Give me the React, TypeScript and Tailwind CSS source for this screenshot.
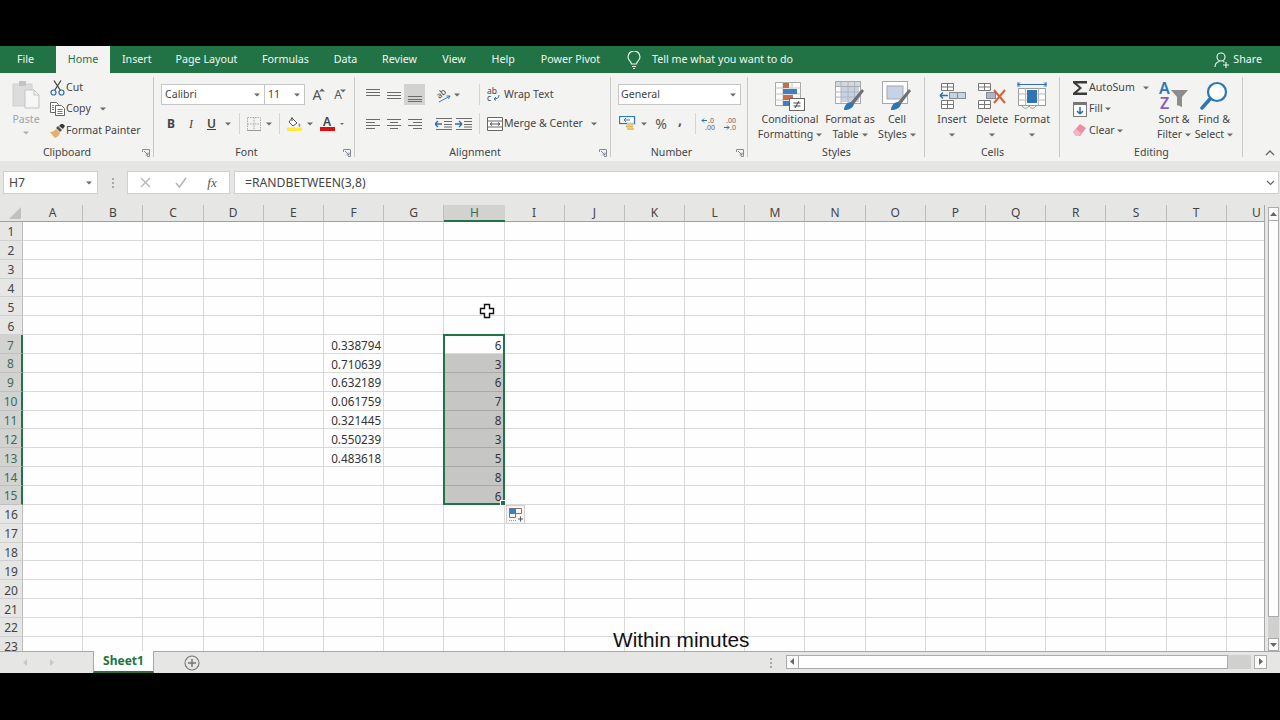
import type { ReactNode } from 'react';

const UI = "font-['Noto_Sans',sans-serif]";

const tabs = [
  { label: 'Insert', w: 'w-[53.5px]' },
  { label: 'Page Layout', w: 'w-[86px]' },
  { label: 'Formulas', w: 'w-[72px]' },
  { label: 'Data', w: 'w-[48px]' },
  { label: 'Review', w: 'w-[60px]' },
  { label: 'View', w: 'w-[49px]' },
  { label: 'Help', w: 'w-[49.5px]' },
  { label: 'Power Pivot', w: 'w-[85px]' },
];

const columns = ['A', 'B', 'C', 'D', 'E', 'F', 'G', 'H', 'I', 'J', 'K', 'L', 'M', 'N', 'O', 'P', 'Q', 'R', 'S', 'T', 'U'];
const rows = Array.from({ length: 23 }, (_, i) => i + 1);

const randValues: Record<number, string> = {
  7: '0.338794',
  8: '0.710639',
  9: '0.632189',
  10: '0.061759',
  11: '0.321445',
  12: '0.550239',
  13: '0.483618',
};

const betweenValues: Record<number, string> = { 7: '6', 8: '3', 9: '6', 10: '7', 11: '8', 12: '3', 13: '5', 14: '8', 15: '6' };

const Caret = ({ className = '' }: { className?: string }) => (
  <svg width="6" height="4" viewBox="0 0 6 4" className={className}>
    <path d="M0 .5h6L3 3.5z" fill="#6a6a6a" />
  </svg>
);

const Launcher = () => (
  <svg width="8" height="8" viewBox="0 0 8 8" className="absolute right-[4px] bottom-[4px]">
    <path d="M.5 3V.5H7.5V7.5H5" fill="none" stroke="#8c8c8c" />
    <path d="M2 2l4 4M6 3.5V6H3.5" fill="none" stroke="#6c8aa8" />
  </svg>
);

const Slot = ({ w, children }: { w: string; children?: ReactNode }) => (
  <span className={`${w} flex items-center justify-center shrink-0`}>{children}</span>
);

const VSep = () => <span className="w-px h-full bg-[#d4d4d3] shrink-0" />;

const Group = ({ w, label, launcher, pr, children }: { w: string; label: string; launcher?: boolean; pr?: string; children: ReactNode }) => (
  <div className={`${w} relative shrink-0 flex flex-col`}>
    <div className="h-[71px] flex">{children}</div>
    <div className={`h-[16px] leading-[16px] text-center text-[10.6px] text-[#444] ${pr ?? ''}`}>{label}</div>
    {launcher && <Launcher />}
    <span className="absolute right-0 top-[4px] bottom-[4px] w-px bg-[#c8c8c7]" />
  </div>
);

const Lines = ({ ys }: { ys: number[] }) => (
  <svg width="14" height="14" viewBox="0 0 14 14">
    {ys.map((y) => (
      <path key={y} d={`M0 ${y}.5H14`} stroke="#6b6b6b" />
    ))}
  </svg>
);

const AlignH = ({ d }: { d: string }) => (
  <svg width="14" height="12" viewBox="0 0 14 12">
    <path d={d} stroke="#6b6b6b" fill="none" />
  </svg>
);

const BigButton = ({ w, icon, lines }: { w: string; icon: ReactNode; lines: ReactNode[] }) => (
  <div className={`${w} shrink-0 flex flex-col items-center pt-[8px] text-[10.6px] leading-[15px] text-[#444]`}>
    <div className="h-[30px] flex items-center justify-center">{icon}</div>
    <div className="mt-[1px] whitespace-nowrap">{lines[0]}</div>
    <div className="whitespace-nowrap flex items-center justify-center h-[15px]">
      {lines[1]}
      <Caret className={lines[1] ? 'ml-[3px]' : ''} />
    </div>
  </div>
);

const PasteIcon = () => (
  <svg width="28" height="29" viewBox="0 0 28 29">
    <rect x="1" y="4" width="19" height="22" fill="#dcdcdc" stroke="#d0d0d0" />
    <rect x="7" y="1" width="7" height="5" fill="#c4c4c4" />
    <path d="M13 10h9l5 5v13H13z" fill="#f6f6f6" stroke="#c4c4c4" />
    <path d="M22 10v5h5" fill="none" stroke="#c4c4c4" />
  </svg>
);

const CutIcon = () => (
  <svg width="15" height="16" viewBox="0 0 15 16">
    <path d="M4.5 10.5L11 .5M10.500 10.500L4 .5" stroke="#444" strokeWidth="1.3" fill="none" />
    <circle cx="3.5" cy="12.5" r="2.5" fill="none" stroke="#2e6fb0" strokeWidth="1.2" />
    <circle cx="11.5" cy="12.5" r="2.5" fill="none" stroke="#2e6fb0" strokeWidth="1.2" />
  </svg>
);

const CopyIcon = () => (
  <svg width="15" height="14" viewBox="0 0 15 14">
    <path d="M.5 .5h6l2 2v8h-8z" fill="#fff" stroke="#666" />
    <path d="M5.500 3.500h6l3 3v7h-9z" fill="#fff" stroke="#666" />
    <path d="M7.500 7.500h5M7.500 9.500h5M7.500 11.500h5M2 3.500h2M2 5.500h2M2 7.500h2" stroke="#777" />
  </svg>
);

const PainterIcon = () => (
  <svg width="15" height="14" viewBox="0 0 15 14">
    <path d="M0 8c3 0 5-2 6-3l4 4c-1 2-2 4-5 5-1-1-3-3-5-6z" fill="#e3b268" />
    <path d="M6 4l2-2 4 4-2 2z" fill="#555" />
    <path d="M9 2l2-2h2l2 2-2 3z" fill="#3a3a3a" />
  </svg>
);

const OrientIcon = () => (
  <svg width="16" height="16" viewBox="0 0 16 16" className="overflow-visible">
    <text x="2" y="10" fontSize="8.5" fill="#444" transform="rotate(-40 6 8)" fontFamily="Noto Sans">ab</text>
    <path d="M4 15l11-6M15 9l-3.500 0M15 9l-1.600 3" stroke="#3f7cb8" fill="none" />
  </svg>
);

const IndentIcon = ({ out }: { out?: boolean }) => (
  <svg width="17" height="12" viewBox="0 0 17 12">
    {out ? (
      <path d="M0 6h7M0 6l3-3M0 6l3 3" stroke="#2e6fb0" strokeWidth="1.4" fill="none" />
    ) : (
      <path d="M7 6H0M7 6L4 3M7 6L4 9" stroke="#2e6fb0" strokeWidth="1.4" fill="none" />
    )}
    <path d="M1 .5h16M9 3.500h8M9 6.500h8M9 9h8M1 11.500h16" stroke="#6b6b6b" fill="none" />
  </svg>
);

const BordersIcon = () => (
  <svg width="14" height="14" viewBox="0 0 14 14">
    <path d="M.5 .5h13v13h-13zM7 .5v13M.5 7h13" fill="none" stroke="#aaa" strokeDasharray="1.5 1" />
    <path d="M0 13.500h14" stroke="#999" />
  </svg>
);

const FillIcon = () => (
  <svg width="16" height="15" viewBox="0 0 16 15">
    <path d="M5 2l5 5-4 3-4-4z" fill="#fff" stroke="#555" />
    <path d="M5 1V5" stroke="#555" />
    <path d="M12 7c1 1.500 2 2.500 1 3.500s-2-1-1-3.500z" fill="#5e8fc0" />
    <rect x="0" y="11.500" width="15" height="3.500" fill="#ffeb3b" />
  </svg>
);

const WrapIcon = () => (
  <svg width="15" height="15" viewBox="0 0 15 15" className="overflow-visible">
    <text x="0" y="7" fontSize="8.5" fill="#444" fontFamily="Noto Sans">ab</text>
    <text x="0" y="14" fontSize="8.5" fill="#444" fontFamily="Noto Sans">c</text>
    <path d="M12 8c0 3-2 4-5 4M7 12l2-2M7 12l2 1.500" stroke="#2e6fb0" fill="none" />
  </svg>
);

const MergeIcon = () => (
  <svg width="16" height="14" viewBox="0 0 16 14">
    <path d="M.5 .5h15v13h-15zM.5 4h15M.5 10h15" fill="#fff" stroke="#666" />
    <path d="M3 7h10M3 7l2-1.500M3 7l2 1.500M13 7l-2-1.500M13 7l-2 1.500" stroke="#555" fill="none" />
  </svg>
);

const AccountingIcon = () => (
  <svg width="17" height="15" viewBox="0 0 17 15">
    <rect x=".5" y=".5" width="15" height="7" fill="#fff" stroke="#2e7cc0" strokeWidth="1.3" />
    <path d="M5 4h6M5 4l2-2M5 4l2 2" stroke="#2e7cc0" fill="none" />
    <rect x="8" y="7" width="7" height="2" fill="#e9c46a" />
    <rect x="7" y="9.500" width="7" height="2" fill="#d9b45a" />
    <rect x="8" y="12" width="7" height="2" fill="#e9c46a" />
  </svg>
);

const DecimalIcon = ({ more }: { more?: boolean }) => (
  <svg width="16" height="14" viewBox="0 0 16 14" fontFamily="Noto Sans" fontSize="7" fill="#666" className="overflow-visible">
    {more ? (
      <>
        <path d="M0 3.500h5M0 3.500l2-2M0 3.500l2 2" stroke="#2e6fb0" fill="none" />
        <text x="6" y="6">.0</text>
        <text x="3" y="13">.00</text>
      </>
    ) : (
      <>
        <text x="3" y="6">.00</text>
        <path d="M1 10.500h5M6 10.500l-2-2M6 10.500l-2 2" stroke="#2e6fb0" fill="none" />
        <text x="7" y="13">.0</text>
      </>
    )}
  </svg>
);

const ConditionalIcon = () => (
  <svg width="30" height="29" viewBox="0 0 30 29">
    <path d="M.5 .5h25v23h-25z" fill="#fff" stroke="#a8a8a8" />
    <path d="M8 .5v23M17 .5v23M.5 6h25M.5 12h25M.5 18h25" stroke="#c4c4c4" />
    <rect x="8" y="1" width="6" height="5" fill="#cc6b45" />
    <rect x="8" y="7" width="14" height="5" fill="#3f7fbf" />
    <rect x="8" y="13" width="10" height="5" fill="#cc6b45" />
    <rect x="8" y="19" width="6" height="5" fill="#3f7fbf" />
    <rect x="14.500" y="16.500" width="15" height="12" fill="#fff" stroke="#666" />
    <path d="M18.500 21h7M18.500 24h7M20 26l4-7" stroke="#444" fill="none" />
  </svg>
);

const Brush = () => (
  <>
    <path d="M9 29c0-4 3-8 7-8 2 0 3 1 3 2-1 4-5 6-10 6z" fill="#2e75b6" />
    <path d="M16 21L27 8l2 2-10 13z" fill="#707070" />
  </>
);

const FormatTableIcon = () => (
  <svg width="30" height="30" viewBox="0 0 30 30">
    <rect x=".5" y=".5" width="25" height="22" fill="#fff" stroke="#a8a8a8" />
    <rect x=".5" y=".5" width="25" height="5" fill="#cfd8e4" stroke="#a8a8a8" />
    <rect x="6" y="6" width="18" height="15" fill="#c5d3e6" />
    <path d="M6 .5v22M13 .5v22M19.500 .5v22M.5 11h25M.5 16h25" stroke="#b4b4b4" />
    <Brush />
  </svg>
);

const CellStylesIcon = () => (
  <svg width="30" height="30" viewBox="0 0 30 30">
    <rect x=".5" y=".5" width="25" height="22" fill="#fff" stroke="#a8a8a8" />
    <rect x="5" y="5" width="16" height="13" fill="#c5d3e6" stroke="#a8a8a8" />
    <Brush />
  </svg>
);

const InsertIcon = () => (
  <svg width="28" height="28" viewBox="0 0 28 28">
    <path d="M3.500 1.500h12v7h-12zM9.500 1.500v7M3.500 5h12" fill="#fff" stroke="#777" />
    <path d="M3.500 18.500h12v8h-12zM9.500 18.500v8M3.500 22.500h12" fill="#fff" stroke="#777" />
    <path d="M2 13.500h8M2 13.500l3-3M2 13.500l3 3" stroke="#2e6fb0" strokeWidth="1.4" fill="none" />
    <rect x="11.500" y="10.500" width="16" height="6" fill="#c5d3e6" stroke="#8a8a8a" />
    <path d="M19.500 10.500v6" stroke="#8a8a8a" />
  </svg>
);

const DeleteIcon = () => (
  <svg width="30" height="28" viewBox="0 0 30 28">
    <path d="M1.500 1.500h12v7h-12zM7.500 1.500v7M1.500 5h12" fill="#fff" stroke="#777" />
    <path d="M1.500 18.500h12v8h-12zM7.500 18.500v8M1.500 22.500h12" fill="#fff" stroke="#777" />
    <rect x="9.500" y="10.500" width="9" height="6" fill="#a8b8cc" stroke="#8a8a8a" />
    <path d="M17 8l11 13M28 8L17 21" stroke="#d2633c" strokeWidth="2" />
  </svg>
);

const FormatIcon = () => (
  <svg width="30" height="30" viewBox="0 0 30 30">
    <path d="M1 1v5M1 3.500h28M29 1v5M1 3.500l2-2M1 3.500l2 2M29 3.500l-2-2M29 3.500l-2 2" stroke="#2e6fb0" fill="none" />
    <path d="M1.500 7.500h27v17h-27z" fill="#fff" stroke="#9a9a9a" />
    <path d="M8.500 7.500v17M21.500 7.500v17M1.500 13h27M1.500 19h27" stroke="#b8b8b8" />
    <rect x="10" y="9" width="10" height="13" fill="#2e75b6" />
    <path d="M5 25c2 3 5 3 7 0 2 3 5 3 7 0" fill="none" stroke="#9a9a9a" />
  </svg>
);

const SumIcon = () => (
  <svg width="14" height="14" viewBox="0 0 14 14">
    <path d="M0 0h14v2.500H4L9 7l-5 4.500h10V14H0v-2l6-5-6-5z" fill="#3c3c3c" />
  </svg>
);

const FillDownIcon = () => (
  <svg width="14" height="15" viewBox="0 0 14 15">
    <rect x=".5" y=".5" width="13" height="14" fill="#fff" stroke="#777" />
    <rect x="0" y="0" width="14" height="3" fill="#777" />
    <path d="M7 5v7M7 12L4 9M7 12l3-3" stroke="#2e6fb0" strokeWidth="1.6" fill="none" />
  </svg>
);

const EraserIcon = () => (
  <svg width="14" height="13" viewBox="0 0 14 13">
    <path d="M0 8l7-8 6 4-6 8H3z" fill="#ea8fa2" />
    <path d="M0 8l3-3 5 4-2 3H3z" fill="#f4b8c4" />
  </svg>
);

const SortIcon = () => (
  <svg width="30" height="30" viewBox="0 0 30 30" fontFamily="Noto Sans" fontWeight="600" fontSize="16" className="overflow-visible">
    <text x="0" y="13" fill="#2e75b6">A</text>
    <text x="1" y="28" fill="#8f5bb8">Z</text>
    <path d="M12 9h17l-6 7v10l-5-2v-8z" fill="#8c8c8c" />
  </svg>
);

const FindIcon = () => (
  <svg width="28" height="30" viewBox="0 0 28 30">
    <circle cx="17" cy="11" r="9" fill="#fff" stroke="#2e75b6" strokeWidth="2.2" />
    <path d="M10 18L2 27" stroke="#2e75b6" strokeWidth="3.5" strokeLinecap="round" />
  </svg>
);

const CursorIcon = () => (
  <svg width="16" height="16" viewBox="0 0 16 16">
    <path d="M5.500 1.500h5v4h4v5h-4v4h-5v-4h-4v-5h4z" fill="#fff" stroke="#111" strokeWidth="1.4" />
  </svg>
);

const PasteOptions = () => (
  <div className="absolute left-[506px] top-[300px] w-[19px] h-[19px] bg-[#f6f6f6] border border-[#d0d0d0] flex items-center justify-center">
    <svg width="14" height="14" viewBox="0 0 14 14">
      <rect x="0" y="0" width="7" height="5" fill="#3f7cc8" />
      <path d="M.5 .5h12v5h-12zM.5 5.500h6v4h-6z" fill="none" stroke="#777" />
      <path d="M0 12.500h8" stroke="#999" strokeDasharray="1 1" />
      <path d="M9 11h5M11.500 8.500v5" stroke="#555" />
    </svg>
  </div>
);

const ScrollBtn = ({ d, w, h }: { d: string; w: string; h: string }) => (
  <div className={`${w} ${h} shrink-0 bg-[#fbfbfb] border border-[#ababab] flex items-center justify-center`}>
    <svg width="7" height="7" viewBox="0 0 7 7">
      <path d={d} fill="#666" />
    </svg>
  </div>
);

export default function App() {
  return (
    <div className={`w-[1280px] h-[720px] bg-black overflow-hidden pt-[46px] pb-[47px] flex flex-col ${UI}`}>
      {/* Tabs */}
      <div className="h-[27px] shrink-0 bg-[#217346] flex items-stretch text-[10.7px] text-[#f2f6f3]">
        <div className="w-[56px] pl-[17px] leading-[26px]">File</div>
        <div className="w-[54px] bg-[#f3f3f2] text-[#217346] text-center leading-[26px]">Home</div>
        {tabs.map((t) => (
          <div key={t.label} className={`${t.w} text-center leading-[26px] whitespace-nowrap`}>
            {t.label}
          </div>
        ))}
        <div className="ml-[14px] flex items-center">
          <svg width="14" height="18" viewBox="0 0 14 18" fill="none" stroke="#f2f6f3" strokeWidth="1.1">
            <path d="M4.500 13c0-2.500-3.500-3.500-3.500-7a6 6 0 0 1 12 0c0 3.500-3.500 4.500-3.500 7zM5 15.500h4M6 17.500h2" />
          </svg>
          <span className="ml-[11px] whitespace-nowrap">Tell me what you want to do</span>
        </div>
        <div className="ml-auto pr-[18px] flex items-center">
          <svg width="16" height="16" viewBox="0 0 16 16" fill="none" stroke="#f2f6f3" strokeWidth="1.1">
            <circle cx="7" cy="5" r="4" />
            <path d="M1 15c0-3 2-5 4.500-5.500M9 9.500c.5 .1 1 .3 1.500 .6M9 13h6M12 10v6" />
          </svg>
          <span className="ml-[3px]">Share</span>
        </div>
      </div>

      {/* Ribbon */}
      <div className="h-[88px] shrink-0 bg-[#f3f3f2] flex text-[10.6px] text-[#444]">
        <Group w="w-[154px]" label="Clipboard" launcher pr="pr-[20px]">
          <div className="w-[48px] flex flex-col items-center pt-[7px] pl-[4px] text-[#a3a3a3]">
            <PasteIcon />
            <span className="mt-[3px] leading-[15px]">Paste</span>
            <Caret className="mt-[4px] opacity-50" />
          </div>
          <div className="flex flex-col pt-[4px] whitespace-nowrap">
            <div className="h-[21.5px] flex items-center"><Slot w="w-[18px]"><CutIcon /></Slot>Cut</div>
            <div className="h-[21.5px] flex items-center"><Slot w="w-[18px]"><CopyIcon /></Slot>Copy<Caret className="ml-[9px]" /></div>
            <div className="h-[21.5px] flex items-center"><Slot w="w-[18px]"><PainterIcon /></Slot>Format Painter</div>
          </div>
        </Group>

        <Group w="w-[201px]" label="Font" launcher pr="pr-[16px]">
          <div className="pl-[7px] pt-[11px] flex flex-col">
            <div className="h-[21px] flex items-center">
              <div className="w-[104px] h-full bg-white border border-[#c6c6c6] flex items-center justify-between pl-[3px] pr-[4px]">Calibri<Caret /></div>
              <div className="w-[40px] h-full bg-white border border-l-0 border-[#c6c6c6] flex items-center justify-between pl-[3px] pr-[4px]">11<Caret /></div>
              <Slot w="w-[24px]">
                <span className="relative text-[14px] leading-none text-[#555]">A<span className="absolute -right-[4px] top-0"><Caret className="rotate-180" /></span></span>
              </Slot>
              <Slot w="w-[18px]">
                <span className="relative text-[12px] leading-none text-[#555]">A<span className="absolute -right-[4px] top-0"><Caret /></span></span>
              </Slot>
            </div>
            <div className="h-[21px] mt-[8px] flex items-center text-[#444]">
              <Slot w="w-[20px]"><b className="text-[12px]">B</b></Slot>
              <Slot w="w-[20px]"><i className="text-[12px] font-['Liberation_Serif',serif]">I</i></Slot>
              <Slot w="w-[21px]"><u className="text-[12px] font-semibold">U</u></Slot>
              <Slot w="w-[12px]"><Caret /></Slot>
              <span className="w-[5px]" />
              <VSep />
              <span className="w-[4px]" />
              <Slot w="w-[19px]"><BordersIcon /></Slot>
              <Slot w="w-[12px]"><Caret /></Slot>
              <span className="w-[4px]" />
              <VSep />
              <span className="w-[4px]" />
              <Slot w="w-[22px]"><FillIcon /></Slot>
              <Slot w="w-[8px]"><Caret /></Slot>
              <Slot w="w-[26px]">
                <span className="flex flex-col items-center leading-none">
                  <span className="text-[12px] leading-[11px] font-semibold text-[#444]">A</span>
                  <span className="w-[15px] h-[4px] bg-[#e01010]" />
                </span>
              </Slot>
              <Slot w="w-[4px]"><Caret /></Slot>
            </div>
          </div>
        </Group>

        <Group w="w-[256px]" label="Alignment" launcher pr="pr-[16px]">
          <div className="pl-[8px] pt-[11px] flex flex-col whitespace-nowrap">
            <div className="h-[21px] flex items-center">
              <Slot w="w-[20px]"><Lines ys={[1, 4, 7]} /></Slot>
              <Slot w="w-[21px]"><Lines ys={[4, 7, 10]} /></Slot>
              <Slot w="w-[21px]"><span className="w-[21px] h-[21px] bg-[#d2d2d1] flex items-center justify-center"><Lines ys={[8, 11, 13]} /></span></Slot>
              <span className="w-[11px]" />
              <Slot w="w-[14px]"><OrientIcon /></Slot>
              <Slot w="w-[14px]"><Caret /></Slot>
              <span className="w-[15px]" />
              <VSep />
              <span className="w-[7px]" />
              <WrapIcon />
              <span className="ml-[2px]">Wrap Text</span>
            </div>
            <div className="h-[21px] mt-[8px] flex items-center">
              <Slot w="w-[20px]"><AlignH d="M0 1.500h14M0 4.500h9M0 7.500h14M0 10.500h9" /></Slot>
              <Slot w="w-[21px]"><AlignH d="M0 1.500h14M3 4.500h8M0 7.500h14M3 10.500h8" /></Slot>
              <Slot w="w-[21px]"><AlignH d="M0 1.500h14M5 4.500h9M0 7.500h14M5 10.500h9" /></Slot>
              <span className="w-[8px]" />
              <Slot w="w-[20px]"><IndentIcon out /></Slot>
              <Slot w="w-[21px]"><IndentIcon /></Slot>
              <span className="w-[5px]" />
              <VSep />
              <span className="w-[7px]" />
              <MergeIcon />
              <span className="ml-[1px]">Merge &amp; Center</span>
              <Caret className="ml-[8px]" />
            </div>
          </div>
        </Group>

        <Group w="w-[137px]" label="Number" launcher pr="pr-[16px]">
          <div className="pl-[7px] pt-[11px] flex flex-col">
            <div className="w-[123px] h-[21px] bg-white border border-[#c6c6c6] flex items-center justify-between pl-[2px] pr-[4px]">General<Caret /></div>
            <div className="h-[21px] mt-[8px] flex items-center">
              <Slot w="w-[18px]"><AccountingIcon /></Slot>
              <Slot w="w-[16px]"><Caret /></Slot>
              <Slot w="w-[18px]"><span className="text-[14px] text-[#555]">%</span></Slot>
              <Slot w="w-[20px]"><b className="text-[14px] leading-none -mt-[8px] text-[#555]">,</b></Slot>
              <span className="w-[5px]" />
              <VSep />
              <span className="w-[4px]" />
              <Slot w="w-[20px]"><DecimalIcon more /></Slot>
              <Slot w="w-[21px]"><DecimalIcon /></Slot>
            </div>
          </div>
        </Group>

        <Group w="w-[177px]" label="Styles">
          <span className="w-[10px]" />
          <BigButton w="w-[64px]" icon={<ConditionalIcon />} lines={['Conditional', 'Formatting']} />
          <BigButton w="w-[56px]" icon={<FormatTableIcon />} lines={['Format as', 'Table']} />
          <BigButton w="w-[38px]" icon={<CellStylesIcon />} lines={['Cell', 'Styles']} />
        </Group>

        <Group w="w-[135px]" label="Cells">
          <span className="w-[7px]" />
          <BigButton w="w-[40px]" icon={<InsertIcon />} lines={['Insert', '']} />
          <BigButton w="w-[40px]" icon={<DeleteIcon />} lines={['Delete', '']} />
          <BigButton w="w-[40px]" icon={<FormatIcon />} lines={['Format', '']} />
        </Group>

        <Group w="w-[183px]" label="Editing">
          <div className="w-[94px] pl-[11px] pt-[4px] flex flex-col whitespace-nowrap">
            <div className="h-[21.5px] flex items-center"><Slot w="w-[18px]"><SumIcon /></Slot>AutoSum<Caret className="ml-[8px]" /></div>
            <div className="h-[21.5px] flex items-center"><Slot w="w-[18px]"><FillDownIcon /></Slot>Fill<Caret className="ml-[2px]" /></div>
            <div className="h-[21.5px] flex items-center"><Slot w="w-[18px]"><EraserIcon /></Slot>Clear<Caret className="ml-[2px]" /></div>
          </div>
          <BigButton w="w-[40px]" icon={<SortIcon />} lines={['Sort &', 'Filter']} />
          <BigButton w="w-[40px]" icon={<FindIcon />} lines={['Find &', 'Select']} />
        </Group>

        <div className="flex-1 flex flex-col justify-end items-end pr-[5px] pb-[5px]">
          <svg width="10" height="6" viewBox="0 0 10 6" fill="none" stroke="#666" strokeWidth="1.3"><path d="M1 5l4-4 4 4" /></svg>
        </div>
      </div>

      {/* Formula bar */}
      <div className="h-[44px] shrink-0 bg-[#e6e6e5] flex items-start pt-[10px] text-[12.2px] text-[#444]">
        <div className="ml-[3px] w-[95px] h-[23px] pt-px bg-white border border-[#d0d0d0] flex items-center justify-between pl-[5px] pr-[5px]">H7<Caret /></div>
        <div className="w-[29px] h-[23px] flex flex-col items-center justify-center gap-[2px]">
          <span className="w-[2px] h-[2px] bg-[#a8a8a8]" />
          <span className="w-[2px] h-[2px] bg-[#a8a8a8]" />
          <span className="w-[2px] h-[2px] bg-[#a8a8a8]" />
        </div>
        <div className="w-[103px] h-[23px] bg-white border border-[#d0d0d0] flex items-center text-[#b0b0b0]">
          <Slot w="w-[35px]">
            <svg width="11" height="11" viewBox="0 0 11 11" stroke="#b4b4b4" strokeWidth="1.3"><path d="M1 1l9 9M10 1l-9 9" /></svg>
          </Slot>
          <Slot w="w-[35px]">
            <svg width="12" height="11" viewBox="0 0 12 11" fill="none" stroke="#b4b4b4" strokeWidth="1.5"><path d="M1 6l3.500 4L11 1" /></svg>
          </Slot>
          <Slot w="w-[28px]"><i className="font-['Liberation_Serif',serif] text-[13px] text-[#555]">fx</i></Slot>
        </div>
        <div className="ml-[4px] flex-1 h-[23px] pt-px bg-white border border-[#d0d0d0] flex items-center justify-between pl-[10px] pr-[3px] mr-px">
          =RANDBETWEEN(3,8)
          <svg width="9" height="6" viewBox="0 0 9 6" fill="none" stroke="#666" strokeWidth="1.2"><path d="M1 1l3.500 3.500L8 1" /></svg>
        </div>
      </div>

      {/* Sheet */}
      <div className="flex-1 min-h-0 flex bg-[#e6e6e5]">
        <div className="w-[1265px] relative overflow-hidden border-r border-[#a8a8a8]">
          <div className="grid grid-cols-[23px_repeat(21,60.2px)] grid-rows-[17px_repeat(23,18.86px)] w-max text-[12px] text-[#444]">
            <div className="bg-[#e6e6e5] border-b border-[#a0a0a0] flex items-end justify-end pr-[2px] pb-[2px]">
              <svg width="12" height="12" viewBox="0 0 12 12"><path d="M12 0v12H0z" fill="#c0c0c0" /></svg>
            </div>
            {columns.map((c) =>
              c === 'H' ? (
                <div key={c} className="bg-[#d2d2d1] border-b-2 border-[#217346] text-[#3f6b52] flex items-center justify-center leading-none">{c}</div>
              ) : (
                <div key={c} className="bg-[#e6e6e5] border-r border-b border-r-[#bdbdbd] border-b-[#a0a0a0] flex items-center justify-center leading-none">{c}</div>
              ),
            )}
            {rows.map((r) => {
              const active = r >= 7 && r <= 15;
              return (
                <div key={r} className="contents">
                  {active ? (
                    <div className="bg-[#d2d2d1] border-b border-r-2 border-b-[#c0c0c0] border-r-[#217346] text-[#3f6b52] flex items-center justify-center pt-[3px] leading-none">{r}</div>
                  ) : (
                    <div className="bg-[#e6e6e5] border-b border-r border-b-[#d0d0d0] border-r-[#bdbdbd] flex items-center justify-center pt-[3px] leading-none">{r}</div>
                  )}
                  {columns.map((c) => {
                    if (c === 'H' && r >= 8 && r <= 15) {
                      return (
                        <div key={c} className="bg-[#c6c7c5] border-b border-[#a9aaa8] flex items-center justify-end pt-[3px] pr-[3px] text-[11.7px] leading-none text-[#333]">
                          {betweenValues[r]}
                        </div>
                      );
                    }
                    return (
                      <div key={c} className="bg-[#fdfefd] border-r border-b border-[#d9d9d8] flex items-center justify-end pt-[3px] pr-[2px] text-[11.7px] leading-none text-[#333]">
                        {c === 'F' ? randValues[r] : c === 'H' ? betweenValues[r] : ''}
                      </div>
                    );
                  })}
                </div>
              );
            })}
          </div>

          {/* Selection overlay */}
          <div className="absolute left-[443px] top-[129px] w-[62px] h-[171px] border-2 border-[#217346]">
            <span className="absolute -right-[3px] -bottom-[3px] w-[6px] h-[6px] bg-[#217346] border border-white" />
          </div>
          <PasteOptions />
          <div className="absolute left-[479px] top-[98px]"><CursorIcon /></div>
          <div className="absolute left-[613px] top-[423px] font-['Liberation_Sans',sans-serif] text-[20.8px] leading-[24px] text-[#111] whitespace-nowrap">Within minutes</div>
        </div>

        <div className="w-[14px] shrink-0 flex flex-col pl-[3px] pt-[2px]">
          <ScrollBtn w="w-[11px]" h="h-[14px]" d="M0 5l3.500-4L7 5z" />
          <div className="h-[396px] bg-[#fdfefd] border-x border-b border-[#ababab]" />
          <div className="flex-1 bg-[#d0d0cf]" />
          <ScrollBtn w="w-[11px]" h="h-[13px]" d="M0 2l3.500 4L7 2z" />
        </div>
      </div>

      {/* Sheet tabs */}
      <div className="h-[22px] shrink-0 bg-[#e6e6e5] flex items-stretch border-t border-[#a8a8a8]">
        <div className="w-[93px] flex items-center">
          <svg width="7" height="9" viewBox="0 0 7 9" className="ml-[22px]"><path d="M5 1L1 4.500 5 8z" fill="#c8c8c8" /></svg>
          <svg width="7" height="9" viewBox="0 0 7 9" className="ml-[19px]"><path d="M2 1l4 3.500L2 8z" fill="#c8c8c8" /></svg>
        </div>
        <div className="w-[61px] -mt-px bg-[#fdfefd] border-x border-[#a8a8a8] border-b-2 border-b-[#217346] flex items-center justify-center text-[12px] font-bold text-[#217346] leading-none">Sheet1</div>
        <div className="ml-[30px] flex items-center">
          <svg width="16" height="16" viewBox="0 0 16 16" fill="none" stroke="#777" strokeWidth="1.1">
            <circle cx="8" cy="8" r="7" />
            <path d="M8 4v8M4 8h8" strokeWidth="1.5" />
          </svg>
        </div>
        <div className="ml-[570px] flex flex-col justify-center gap-[2px]">
          <span className="w-[2px] h-[2px] bg-[#a8a8a8]" />
          <span className="w-[2px] h-[2px] bg-[#a8a8a8]" />
          <span className="w-[2px] h-[2px] bg-[#a8a8a8]" />
        </div>
        <div className="ml-[14px] flex items-center mb-[2px]">
          <ScrollBtn w="w-[13px]" h="h-[14px]" d="M5 0L1 3.500 5 7z" />
          <div className="w-[429px] h-[14px] bg-[#fdfefd] border-y border-r border-[#ababab]" />
          <div className="w-[23px] h-[14px] bg-[#d0d0cf]" />
          <span className="w-[3px]" />
          <ScrollBtn w="w-[13px]" h="h-[14px]" d="M2 0l4 3.500L2 7z" />
        </div>
      </div>
    </div>
  );
}
